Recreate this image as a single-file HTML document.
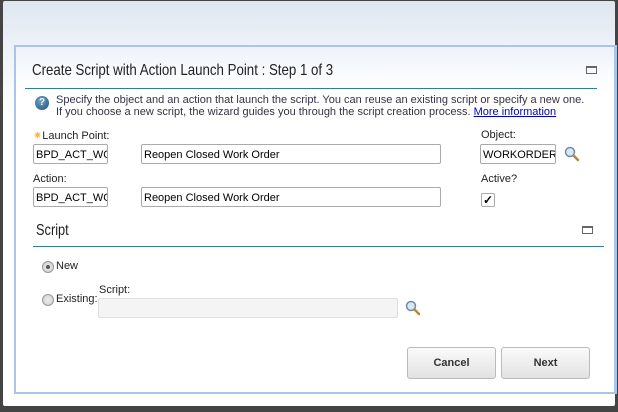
<!DOCTYPE html><html><head><style>
body{margin:0;width:618px;height:412px;background:#444;position:relative;overflow:hidden;font-family:"Liberation Sans",sans-serif;}
#win{position:absolute;left:3px;top:1px;width:612px;height:405px;background:linear-gradient(#dfe6f0,#eef2f8 45px,#fff 120px);border-radius:2px}
#pan{position:absolute;left:14px;top:45px;width:598px;height:345px;border:2px solid #a9c5ea;border-right:3px solid #a9c5ea;background:linear-gradient(#eef3fa,#fff 40px);}
.a{position:absolute;font-size:11px;color:#222;white-space:nowrap;transform-origin:left top}
.in{position:absolute;height:20px;border:1px solid #aaa;background:#fff;font-size:11px;line-height:20px;padding-left:2px;overflow:hidden;white-space:nowrap;box-sizing:border-box;border-radius:2px}
.min{position:absolute;width:9px;height:5px;border:1px solid #666;border-top-width:2px;}
.btn{position:absolute;width:87px;height:30px;border:1px solid #bbb;border-radius:3px;background:linear-gradient(#fafafa,#e2e2e2);font-size:11px;font-weight:bold;text-align:center;line-height:30px;color:#333}
.rad{position:absolute;width:10px;height:10px;border-radius:50%;border:1px solid #999;background:radial-gradient(#eee,#ccc)}
</style></head><body>
<div id="win"></div>
<div id="pan"></div>
<div class="a" style="left:32px;top:62px;font-size:16px;color:#222;transform:scaleX(0.83)">Create Script with Action Launch Point : Step 1 of 3</div>
<div class="min" style="left:586px;top:66px"></div>
<div style="position:absolute;left:25px;top:88px;width:572px;height:1px;background:#2f7f96"></div>
<div style="position:absolute;left:35px;top:96px;width:14px;height:14px;border-radius:50%;background:radial-gradient(circle at 40% 35%,#6fa3c8,#1d4f78);color:#fff;font-size:10px;font-weight:bold;text-align:center;line-height:14px">?</div>
<div class="a" style="left:56px;top:94px;color:#334">Specify the object and an action that launch the script. You can reuse an existing script or specify a new one.</div>
<div class="a" style="left:56px;top:106px;color:#334">If you choose a new script, the wizard guides you through the script creation process. <span style="color:#00c;text-decoration:underline">More information</span></div>
<div class="a" style="left:33px;top:129px"><span style="color:#f5b830">✷</span>Launch Point:</div>
<div class="in" style="left:33px;top:144px;width:75px">BPD_ACT_WO</div>
<div class="in" style="left:141px;top:144px;width:300px">Reopen Closed Work Order</div>
<div class="a" style="left:481px;top:129px">Object:</div>
<div class="in" style="left:480px;top:144px;width:76px">WORKORDER</div>
<svg style="position:absolute;left:564px;top:146px" width="16" height="16"><circle cx="6" cy="6" r="4.5" fill="#dbe8f3" stroke="#6d8ca8" stroke-width="1.5"/><path d="M9.5 9.5L14 14" stroke="#b08a3a" stroke-width="2.5" stroke-linecap="round"/></svg>
<div class="a" style="left:33px;top:173px">Action:</div>
<div class="in" style="left:33px;top:187px;width:75px">BPD_ACT_WO</div>
<div class="in" style="left:141px;top:187px;width:300px">Reopen Closed Work Order</div>
<div class="a" style="left:481px;top:173px">Active?</div>
<div class="in" style="left:481px;top:193px;width:14px;height:14px;padding:0;line-height:12px;text-align:center;font-size:12px;font-weight:bold">✓</div>
<div class="a" style="left:36px;top:222px;font-size:16px;transform:scaleX(0.8)">Script</div>
<div class="min" style="left:582px;top:226px"></div>
<div style="position:absolute;left:33px;top:246px;width:571px;height:1px;background:#2f7f96"></div>
<div class="rad" style="left:42px;top:261px"><div style="margin:3px;width:4px;height:4px;border-radius:50%;background:#555"></div></div>
<div class="a" style="left:56px;top:260px">New</div>
<div class="rad" style="left:42px;top:294px"></div>
<div class="a" style="left:56px;top:293px">Existing:</div>
<div class="a" style="left:99px;top:284px">Script:</div>
<div class="in" style="left:98px;top:298px;width:300px;background:#f4f4f4;border-color:#ddd"></div>
<svg style="position:absolute;left:405px;top:300px" width="16" height="16"><circle cx="6" cy="6" r="4.5" fill="#dbe8f3" stroke="#6d8ca8" stroke-width="1.5"/><path d="M9.5 9.5L14 14" stroke="#b08a3a" stroke-width="2.5" stroke-linecap="round"/></svg>
<div class="btn" style="left:407px;top:347px">Cancel</div>
<div class="btn" style="left:501px;top:347px">Next</div>
</body></html>
